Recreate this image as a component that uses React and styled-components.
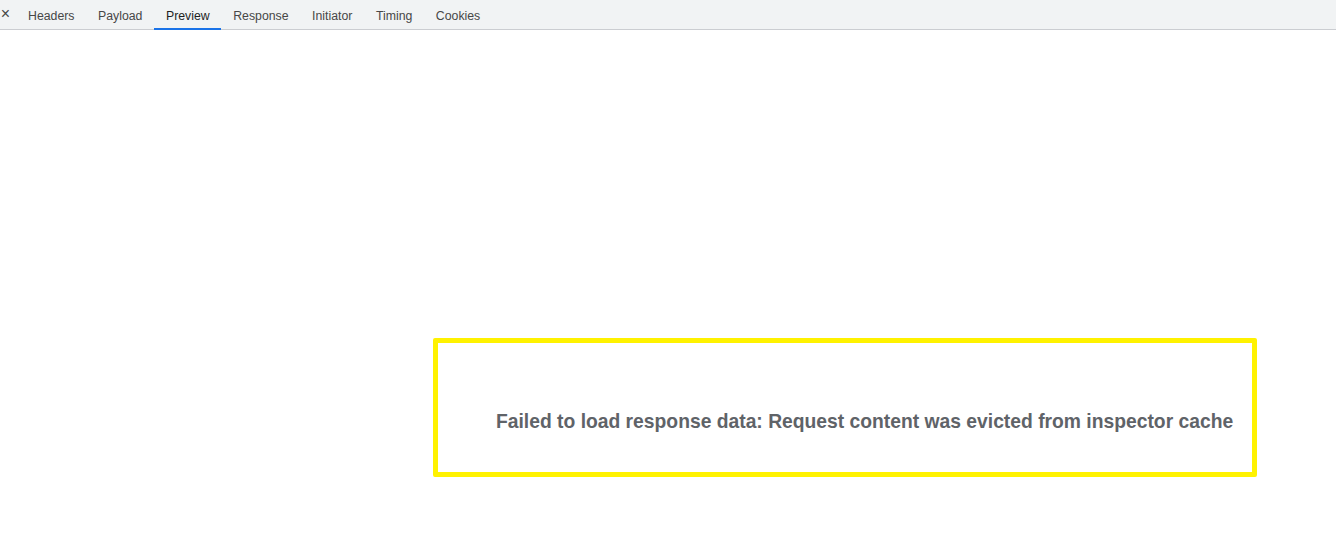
import React from 'react';
import styled, { createGlobalStyle } from 'styled-components';

const GlobalStyle = createGlobalStyle`
  html, body {
    margin: 0;
    padding: 0;
    background: #ffffff;
  }
  body {
    font-family: "Liberation Sans", Arial, sans-serif;
  }
`;

const tabs = ['Headers', 'Payload', 'Preview', 'Response', 'Initiator', 'Timing', 'Cookies'];

const App = () => (
  <Page>
    <GlobalStyle />
    <TabBar>
      <Close>×</Close>
      {tabs.map((t) => (
        <Tab key={t} active={t === 'Preview'}>
          {t}
        </Tab>
      ))}
    </TabBar>
    <Content>
      <Highlight>
        <Message>Failed to load response data: Request content was evicted from inspector cache</Message>
      </Highlight>
    </Content>
  </Page>
);

const Page = styled.div`
  width: 1336px;
  height: 543px;
  display: flex;
  flex-direction: column;
`;

const TabBar = styled.div`
  height: 29px;
  display: flex;
  align-items: stretch;
  background: #f1f3f4;
  border-bottom: 1px solid #cbcdd1;
`;

const Close = styled.span`
  width: 11px;
  display: flex;
  align-items: center;
  justify-content: center;
  font-size: 16px;
  color: #474747;
  padding-bottom: 2px;
  margin-right: 5px;
`;

const Tab = styled.div`
  display: flex;
  align-items: center;
  padding: 3px 11.5px 0 12px;
  font-size: 12.3px;
  color: ${(p) => (p.active ? '#1f1f1f' : '#474747')};
  border-bottom: 2px solid ${(p) => (p.active ? '#1a73e8' : 'transparent')};
  margin-bottom: -1px;
`;

const Content = styled.div`
  flex: 1;
  padding: 308px 0 0 433px;
`;

const Highlight = styled.div`
  box-sizing: content-box;
  width: 756px;
  height: 129px;
  padding-left: 58px;
  border: 5px solid #fff200;
  border-radius: 2px;
  display: flex;
  align-items: flex-start;
`;

const Message = styled.div`
  margin-top: 68px;
  font-size: 19.3px;
  font-weight: bold;
  color: #5f6368;
  white-space: nowrap;
`;

export default App;
